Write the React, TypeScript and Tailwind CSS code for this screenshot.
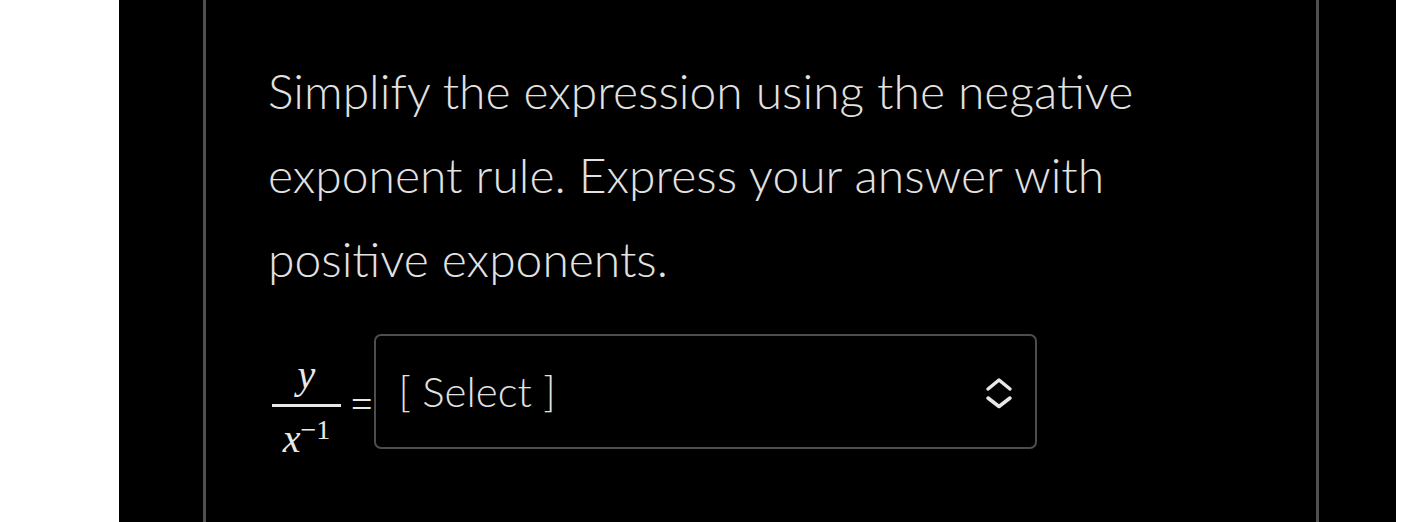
import React from "react";

export default function App() {
  const lato = { fontFamily: "'Lato Light', Lato, 'Open Sans', sans-serif" };
  const serif = { fontFamily: "'Liberation Serif', 'DejaVu Serif', serif" };
  return (
    <div className="flex h-[522px] w-[1414px] overflow-hidden bg-white">
      <div className="w-[119px] shrink-0 bg-white" />
      <div className="flex w-[1277px] shrink-0 bg-black pl-[84px] pr-[77px]">
        <div className="flex-1 border-x-[3px] border-[#505050] pl-[62px] pt-[49px]">
          <p
            className="w-[900px] text-[48px] font-light leading-[84px] text-[#e2e2e2]"
            style={lato}
          >
            Simplify the expression using the negative exponent rule. Express your answer with positive exponents.
          </p>
          <div className="mt-[33px] flex items-start">
            <div className="ml-[4px] mt-[21px] flex w-[69px] flex-col items-center text-[#e8e8e8]" style={serif}>
              <div className="h-[49px] text-[40px] italic leading-[40px]">y</div>
              <div className="h-[3px] w-[69px] bg-[#e8e8e8]" />
              <div className="mt-[3px] h-[40px] whitespace-nowrap text-[40px] leading-[40px]">
                <span className="italic">x</span>
                <span className="align-[13px] text-[28px]">−1</span>
              </div>
            </div>
            <div
              className="ml-[10px] mt-[50px] text-[38px] leading-[40px] text-[#e8e8e8]"
              style={serif}
            >
              =
            </div>
            <div className="ml-[2px] flex h-[115px] w-[663px] items-center justify-between rounded-[7px] border-2 border-[#4d4d4d] pl-[22px] pr-[21px]">
              <span className="text-[42px] font-light text-[#e2e2e2]" style={lato}>
                [ Select ]
              </span>
              <svg width="30" height="32" viewBox="0 0 30 32" fill="none" className="mt-[2px]">
                <path d="M4 12 L15 3 L26 12" stroke="#e8e8e8" strokeWidth="3.5" strokeLinecap="round" strokeLinejoin="round" />
                <path d="M4 21 L15 29.5 L26 21" stroke="#e8e8e8" strokeWidth="3.5" strokeLinecap="round" strokeLinejoin="round" />
              </svg>
            </div>
          </div>
        </div>
      </div>
      <div className="flex-1 bg-white" />
    </div>
  );
}
